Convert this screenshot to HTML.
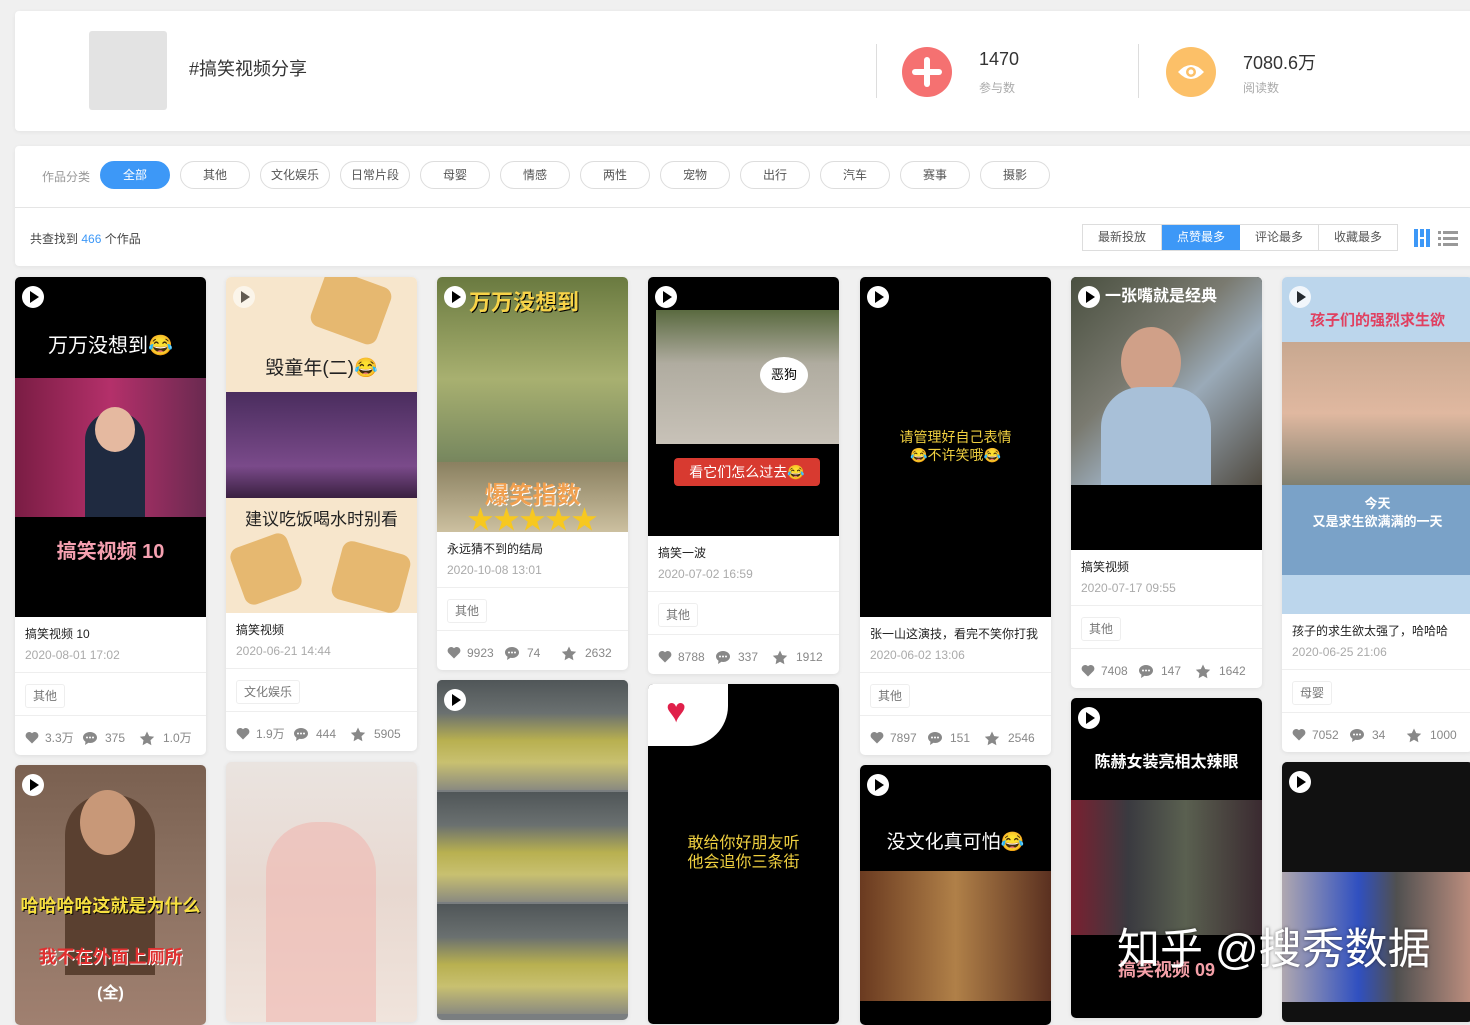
<!DOCTYPE html>
<html><head><meta charset="utf-8"><style>
*{margin:0;padding:0;box-sizing:border-box}
body{width:1470px;height:1006px;overflow:hidden;background:#f0f0f0;font-family:"Liberation Sans","Noto Sans CJK SC",sans-serif;color:#333;position:relative}
.abs{position:absolute}
.box{background:#fff;border-radius:4px;box-shadow:0 1px 4px rgba(0,0,0,.06)}
.pill{position:absolute;top:161px;width:70px;height:28px;border:1px solid #ddd;border-radius:14px;font-size:12px;color:#555;text-align:center;line-height:26px}
.card{position:absolute;width:191px;background:#fff;border-radius:5px;overflow:hidden;box-shadow:0 1px 5px rgba(0,0,0,.08)}
.img{position:relative;overflow:hidden}
.info{height:138px;font-size:12px}
.t{padding:10px 10px 0;line-height:14px;color:#222;white-space:nowrap;overflow:hidden}
.d{padding:0 10px;line-height:20px;margin-top:4px;color:#aaa;font-size:12px;height:27px}
.tg{border-top:1px solid #eee;height:43px;padding:11px 10px 0}
.tg span{display:inline-block;border:1px solid #eee;border-radius:3px;padding:0 7px;height:24px;line-height:22px;color:#777;font-size:12px}
.st{border-top:1px solid #eee;height:40px;position:relative;color:#888;font-size:12px}
.st svg{position:absolute;top:15px}
.st b{position:absolute;top:15px;font-weight:normal;line-height:14px}
.play{position:absolute;left:7px;top:9px;width:22px;height:22px;border-radius:50%;background:#fff}
.play:after{content:"";position:absolute;left:8px;top:5px;border-left:9px solid #000;border-top:6px solid transparent;border-bottom:6px solid transparent}
.cap{position:absolute;left:0;right:0;text-align:center;font-weight:bold}
.bed{position:absolute;left:0;width:191px;height:110px;background:linear-gradient(#505658 0,#6a7070 30%,#b8b050 55%,#c8c070 75%,#8a8a80 100%)}
</style></head><body>

<div class="abs box" style="left:15px;top:11px;width:1470px;height:120px"></div>
<div class="abs" style="left:89px;top:31px;width:78px;height:79px;background:#e3e3e3;border-radius:3px"></div>
<div class="abs" style="left:189px;top:55px;font-size:18px;color:#333">#搞笑视频分享</div>
<div class="abs" style="left:876px;top:44px;width:1px;height:54px;background:#ddd"></div>
<div class="abs" style="left:902px;top:47px;width:50px;height:50px;border-radius:50%;background:#f57171"></div>
<div class="abs" style="left:924px;top:57px;width:6px;height:30px;background:#fff;border-radius:3px"></div>
<div class="abs" style="left:912px;top:69px;width:30px;height:6px;background:#fff;border-radius:3px"></div>
<div class="abs" style="left:979px;top:49px;font-size:18px;color:#333">1470</div>
<div class="abs" style="left:979px;top:79px;font-size:12px;color:#aaa">参与数</div>
<div class="abs" style="left:1138px;top:44px;width:1px;height:54px;background:#ddd"></div>
<div class="abs" style="left:1166px;top:47px;width:50px;height:50px;border-radius:50%;background:#fcc068"></div>
<svg class="abs" style="left:1176px;top:60px" width="30" height="24" viewBox="0 0 30 24"><path d="M2 12 Q15 -2 28 12 Q15 26 2 12Z" fill="#fff"/><circle cx="15" cy="12" r="5" fill="#fcc068"/><circle cx="15" cy="12" r="2.5" fill="#fff"/></svg>
<div class="abs" style="left:1243px;top:49px;font-size:18px;color:#333">7080.6万</div>
<div class="abs" style="left:1243px;top:79px;font-size:12px;color:#aaa">阅读数</div>

<div class="abs box" style="left:15px;top:146px;width:1470px;height:120px"></div>
<div class="abs" style="left:42px;top:168px;font-size:12px;color:#999">作品分类</div>
<div class="pill" style="left:100px;background:#3d98f7;border-color:#3d98f7;color:#fff">全部</div>
<div class="pill" style="left:180px">其他</div>
<div class="pill" style="left:260px">文化娱乐</div>
<div class="pill" style="left:340px">日常片段</div>
<div class="pill" style="left:420px">母婴</div>
<div class="pill" style="left:500px">情感</div>
<div class="pill" style="left:580px">两性</div>
<div class="pill" style="left:660px">宠物</div>
<div class="pill" style="left:740px">出行</div>
<div class="pill" style="left:820px">汽车</div>
<div class="pill" style="left:900px">赛事</div>
<div class="pill" style="left:980px">摄影</div>
<div class="abs" style="left:15px;top:207px;width:1455px;height:1px;background:#e5e5e5"></div>
<div class="abs" style="left:30px;top:230px;font-size:12px;color:#444">共查找到 <span style="color:#3d98f7">466</span> 个作品</div>
<div class="abs" style="left:1082px;top:224px;width:316px;height:27px;border:1px solid #ddd;display:flex;font-size:12px;color:#555">
<div style="flex:1;text-align:center;line-height:25px;border-right:1px solid #ddd">最新投放</div>
<div style="flex:1;text-align:center;line-height:25px;background:#3d98f7;color:#fff">点赞最多</div>
<div style="flex:1;text-align:center;line-height:25px;border-right:1px solid #ddd">评论最多</div>
<div style="flex:1;text-align:center;line-height:25px">收藏最多</div></div>
<svg class="abs" style="left:1413px;top:228px" width="46" height="20"><g fill="#3d98f7"><rect x="1" y="1" width="4" height="18"/><rect x="7" y="1" width="4" height="8"/><rect x="7" y="11" width="4" height="8"/><rect x="13" y="1" width="4" height="18"/></g><g fill="#999"><rect x="25" y="3" width="3" height="3"/><rect x="25" y="9" width="3" height="3"/><rect x="25" y="15" width="3" height="3"/><rect x="30" y="3" width="15" height="3"/><rect x="30" y="9" width="15" height="3"/><rect x="30" y="15" width="15" height="3"/></g></svg>

<!-- Row 1 -->
<div class="card" style="left:15px;top:277px">
<div class="img" style="height:340px;background:#000">
<div class="play"></div>
<div class="cap" style="top:52px;color:#fff;font-size:20px;font-weight:normal">万万没想到😂</div>
<div class="abs" style="top:101px;left:0;width:191px;height:139px;background:linear-gradient(90deg,#7a1d44,#b4306a 50%,#6a2a50)"></div>
<div class="abs" style="top:135px;left:70px;width:60px;height:105px;background:#1f2a40;border-radius:28px 28px 0 0"></div>
<div class="abs" style="top:130px;left:80px;width:40px;height:45px;background:#e5b9a0;border-radius:50%"></div>
<div class="cap" style="top:258px;color:#f5a0b0;font-size:20px">搞笑视频 10</div>
</div>
<div class="info"><div class="t">搞笑视频 10</div><div class="d">2020-08-01 17:02</div><div class="tg"><span>其他</span></div>
<div class="st" data-a="3.3万"></div></div></div>

<div class="card" style="left:226px;top:277px">
<div class="img" style="height:336px;background:#f7e6cc">
<div class="play" style="opacity:.6"></div>
<div class="abs" style="left:90px;top:0;width:70px;height:60px;background:#e6b870;border-radius:10px;transform:rotate(20deg)"></div>
<div class="cap" style="top:76px;color:#222;font-size:19px;font-weight:normal">毁童年(二)😂</div>
<div class="abs" style="top:115px;left:0;width:191px;height:106px;background:linear-gradient(#4a2d5e,#7a4a8a 70%,#3a2040)"></div>
<div class="cap" style="top:228px;color:#222;font-size:17px;font-weight:normal">建议吃饭喝水时别看</div>
<div class="abs" style="left:10px;top:262px;width:60px;height:60px;background:#e6b870;border-radius:10px;transform:rotate(-20deg)"></div>
<div class="abs" style="left:110px;top:270px;width:70px;height:60px;background:#e6b870;border-radius:10px;transform:rotate(15deg)"></div>
</div>
<div class="info"><div class="t">搞笑视频</div><div class="d">2020-06-21 14:44</div><div class="tg"><span>文化娱乐</span></div><div class="st" data-a="1.9万"></div></div></div>

<div class="card" style="left:437px;top:277px">
<div class="img" style="height:255px;background:linear-gradient(#6a7a40,#a8b070 40%,#7a8a60 70%,#605040)">
<div class="play"></div>
<div class="abs" style="left:32px;top:8px;color:#f7d348;font-size:22px;font-weight:bold;text-shadow:1px 1px 0 #000">万万没想到</div>
<div class="abs" style="left:0;top:185px;width:191px;height:70px;background:linear-gradient(#8a8060,#ccc0a0)"></div>
<div class="cap" style="top:198px;color:#f0a050;font-size:24px;text-shadow:1px 1px 0 #fff">爆笑指数</div>
<div class="cap" style="top:230px;color:#f7c820;font-size:26px;line-height:26px">★★★★★</div>
</div>
<div class="info"><div class="t">永远猜不到的结局</div><div class="d">2020-10-08 13:01</div><div class="tg"><span>其他</span></div><div class="st" data-a="9923"></div></div></div>

<div class="card" style="left:648px;top:277px">
<div class="img" style="height:259px;background:#000">
<div class="play"></div>
<div class="abs" style="left:8px;top:33px;width:183px;height:134px;background:linear-gradient(#5a6a40,#b0aca0 40%,#c8c2b8)"></div>
<div class="abs" style="left:112px;top:80px;width:48px;height:36px;background:#fff;border-radius:50%;font-size:13px;color:#000;text-align:center;line-height:36px">恶狗</div>
<div class="abs" style="left:26px;top:181px;width:146px;height:28px;background:#d83a30;border-radius:4px;color:#fff;font-size:14px;text-align:center;line-height:28px">看它们怎么过去😂</div>
</div>
<div class="info"><div class="t">搞笑一波</div><div class="d">2020-07-02 16:59</div><div class="tg"><span>其他</span></div><div class="st" data-a="8788"></div></div></div>

<div class="card" style="left:860px;top:277px">
<div class="img" style="height:340px;background:#000">
<div class="play"></div>
<div class="cap" style="top:151px;color:#f0d040;font-size:14px;line-height:18px;font-weight:normal">请管理好自己表情<br>😂不许笑哦😂</div>
</div>
<div class="info"><div class="t">张一山这演技，看完不笑你打我</div><div class="d">2020-06-02 13:06</div><div class="tg"><span>其他</span></div><div class="st" data-a="7897"></div></div></div>

<div class="card" style="left:1071px;top:277px">
<div class="img" style="height:273px;background:#000">
<div class="abs" style="left:0;top:0;width:191px;height:208px;background:linear-gradient(135deg,#4a5040,#7a7a70 40%,#9aaab8 60%,#504a40)"></div>
<div class="abs" style="left:50px;top:50px;width:60px;height:70px;background:#d0a088;border-radius:50%"></div>
<div class="abs" style="left:30px;top:110px;width:110px;height:98px;background:#a8c0d8;border-radius:40px 40px 0 0"></div>
<div class="play"></div>
<div class="abs" style="left:34px;top:5px;color:#fff;font-size:16px;font-weight:bold">一张嘴就是经典</div>
</div>
<div class="info"><div class="t">搞笑视频</div><div class="d">2020-07-17 09:55</div><div class="tg"><span>其他</span></div><div class="st" data-a="7408"></div></div></div>

<div class="card" style="left:1282px;top:277px">
<div class="img" style="height:337px;background:#bcd6ec">
<div class="play" style="opacity:.8"></div>
<div class="cap" style="top:32px;color:#e04060;font-size:15px">孩子们的强烈求生欲</div>
<div class="abs" style="left:0;top:65px;width:191px;height:143px;background:linear-gradient(#c8a890,#e0b8a0 50%,#808070)"></div>
<div class="abs" style="left:0;top:208px;width:191px;height:90px;background:#7aa2c8"></div>
<div class="cap" style="top:218px;color:#fff;font-size:13px;line-height:18px">今天<br>又是求生欲满满的一天</div>
</div>
<div class="info"><div class="t">孩子的求生欲太强了，哈哈哈</div><div class="d">2020-06-25 21:06</div><div class="tg"><span>母婴</span></div><div class="st" data-a="7052"></div></div></div>

<!-- Row 2 -->
<div class="card" style="left:15px;top:765px;height:260px;background:linear-gradient(#7a6050,#8a7060 40%,#a08070)">
<div class="play"></div>
<div class="abs" style="left:50px;top:30px;width:90px;height:180px;background:#5a4030;border-radius:40px 40px 0 0"></div>
<div class="abs" style="left:65px;top:25px;width:55px;height:65px;background:#c89878;border-radius:50%"></div>
<div class="cap" style="top:127px;color:#f7e040;font-size:18px;text-shadow:1px 1px 0 #000">哈哈哈哈这就是为什么</div>
<div class="cap" style="top:178px;color:#e03030;font-size:18px;text-shadow:1px 1px 0 #fff">我不在外面上厕所</div>
<div class="cap" style="top:214px;color:#fff;font-size:16px">(全)</div>
</div>
<div class="card" style="left:226px;top:762px;height:260px;background:linear-gradient(#eae4e0,#e8d8d0 50%,#f0e4dc)">
<div class="abs" style="left:40px;top:60px;width:110px;height:200px;background:#f0b8b0;border-radius:50px 50px 0 0;opacity:.6"></div>
</div>
<div class="card" style="left:437px;top:680px;height:340px;background:#7a7e80">
<div class="bed" style="top:0"></div><div class="bed" style="top:112px"></div><div class="bed" style="top:224px"></div>
<div class="play"></div></div>
<div class="card" style="left:648px;top:684px;height:340px;background:#000">
<div class="abs" style="left:0;top:0;width:80px;height:62px;background:#fff;border-radius:0 0 40px 0"></div>
<div class="abs" style="left:18px;top:10px;color:#e0204a;font-size:34px;line-height:34px">♥</div>
<div class="cap" style="top:150px;color:#f0d040;font-size:16px;line-height:19px;font-weight:normal">敢给你好朋友听<br>他会追你三条街</div>
</div>
<div class="card" style="left:860px;top:765px;height:260px;background:#000">
<div class="play"></div>
<div class="cap" style="top:62px;color:#fff;font-size:19px;font-weight:normal">没文化真可怕😂</div>
<div class="abs" style="left:0;top:106px;width:191px;height:130px;background:linear-gradient(90deg,#6a3a20,#b08048 50%,#5a3020)"></div>
</div>
<div class="card" style="left:1071px;top:698px;height:320px;background:#000">
<div class="play"></div>
<div class="cap" style="top:50px;color:#fff;font-size:16px">陈赫女装亮相太辣眼</div>
<div class="abs" style="left:0;top:102px;width:191px;height:135px;background:linear-gradient(90deg,#7a2030,#3a3a40 30%,#5a6050 60%,#3a2a30)"></div>
<div class="cap" style="top:258px;color:#f5a0a8;font-size:18px">搞笑视频 09</div>
</div>
<div class="card" style="left:1282px;top:762px;height:260px;background:#111">
<div class="play"></div>
<div class="abs" style="left:0;top:110px;width:191px;height:130px;background:linear-gradient(90deg,#b0a8b0,#3050c0 40%,#505050 60%,#c09080)"></div>
</div>

<div class="abs" style="left:1117px;top:915px;font-size:43px;color:#fff;text-shadow:0 0 3px rgba(0,0,0,.5);white-space:nowrap">知乎 @搜秀数据</div>

<script>
var stats={"3.3万":["375","1.0万"],"1.9万":["444","5905"],"9923":["74","2632"],"8788":["337","1912"],"7897":["151","2546"],"7408":["147","1642"],"7052":["34","1000"]};
document.querySelectorAll('.st').forEach(function(e){var a=e.getAttribute('data-a');var s=stats[a];
e.innerHTML='<svg style="left:10px" width="14" height="13" viewBox="0 0 14 13"><path d="M7 12.5 L1.5 7 A3.3 3.3 0 0 1 7 2.2 A3.3 3.3 0 0 1 12.5 7Z" fill="#888"/></svg><b style="left:30px">'+a+'</b>'+
'<svg style="left:67px" width="16" height="15" viewBox="0 0 16 15"><path d="M8 1C4 1 1 3.5 1 6.5c0 1.7 1 3.2 2.5 4.2L3 14l3.5-2.2c.5.1 1 .2 1.5.2 4 0 7-2.5 7-5.5S12 1 8 1Z" fill="#888"/><circle cx="5" cy="6.5" r="1" fill="#fff"/><circle cx="8" cy="6.5" r="1" fill="#fff"/><circle cx="11" cy="6.5" r="1" fill="#fff"/></svg><b style="left:90px">'+s[0]+'</b>'+
'<svg style="left:124px" width="16" height="15" viewBox="0 0 16 15"><path d="M8 0.5l2.2 4.6 5 .6-3.7 3.5.9 5-4.4-2.4-4.4 2.4.9-5L.8 5.7l5-.6Z" fill="#888"/></svg><b style="left:148px">'+s[1]+'</b>';});
</script>
</body></html>
